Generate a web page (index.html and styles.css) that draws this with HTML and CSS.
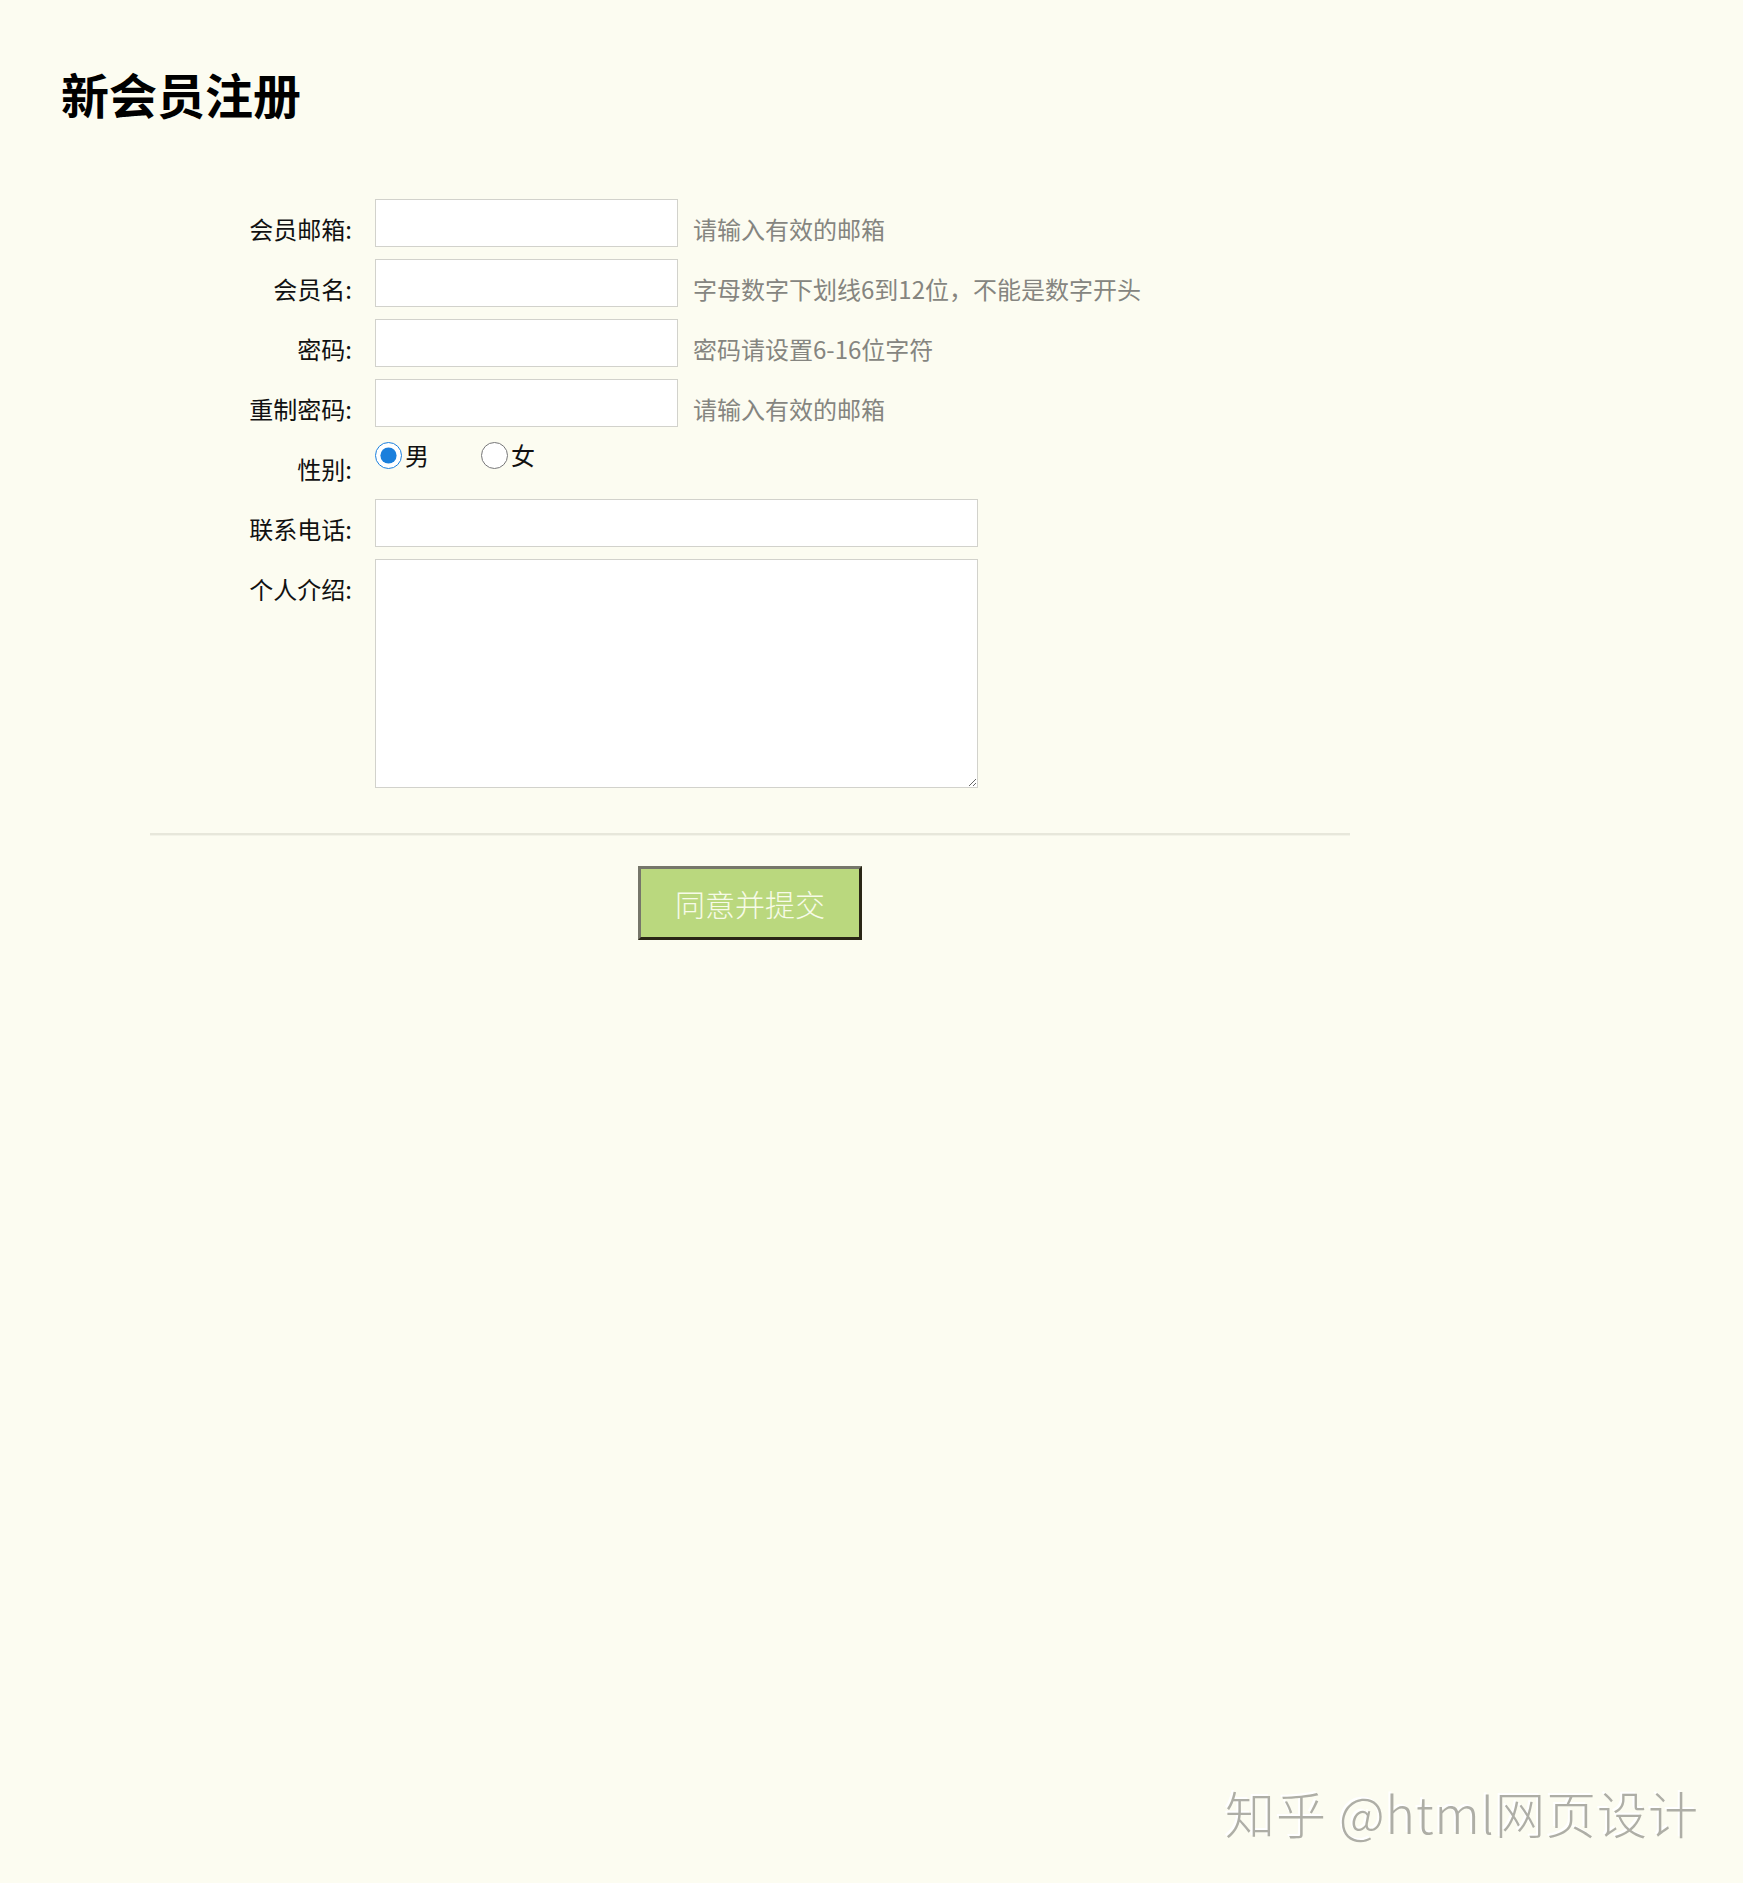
FILE: index.html
```html
<!DOCTYPE html>
<html lang="zh-CN">
<head>
    <meta charset="UTF-8">
    <meta name="viewport" content="width=device-width, initial-scale=1.0">
    <title>新会员注册</title>
    <link rel="stylesheet" href="styles.css">
</head>
<body>

    <h1>新会员注册</h1>

    <form class="reg-form">
        <div class="row">
            <label class="row-label" for="email">会员邮箱:</label>
            <input type="text" id="email" class="field">
            <span class="hint">请输入有效的邮箱</span>
        </div>
        <div class="row">
            <label class="row-label" for="username">会员名:</label>
            <input type="text" id="username" class="field">
            <span class="hint">字母数字下划线6到12位，不能是数字开头</span>
        </div>
        <div class="row">
            <label class="row-label" for="pwd">密码:</label>
            <input type="password" id="pwd" class="field">
            <span class="hint">密码请设置6-16位字符</span>
        </div>
        <div class="row">
            <label class="row-label" for="pwd2">重制密码:</label>
            <input type="password" id="pwd2" class="field">
            <span class="hint">请输入有效的邮箱</span>
        </div>
        <div class="row">
            <span class="row-label">性别:</span>
            <div class="radio-group">
                <label class="radio"><input type="radio" name="sex" value="m" checked>男</label>
                <label class="radio"><input type="radio" name="sex" value="f">女</label>
            </div>
        </div>
        <div class="row">
            <label class="row-label" for="phone">联系电话:</label>
            <input type="text" id="phone" class="field field-wide">
        </div>
        <div class="row">
            <label class="row-label" for="intro">个人介绍:</label>
            <textarea id="intro" class="field field-wide field-area"></textarea>
        </div>

        <hr class="divider">

        <div class="actions">
            <button type="submit" class="submit-btn">同意并提交</button>
        </div>
    </form>

    <div class="watermark">知乎 @html网页设计</div>

</body>
</html>
```

FILE: styles.css
```css
body {
    margin: 0;
    padding: 0;
    background-color: #fcfcf1;
    color: #111;
    font-family: "Noto Sans CJK SC", "Noto Sans", sans-serif;
}

h1 {
    margin: 64px 0 0;
    padding: 0 56px 0 61px;
    font-size: 48px;
    line-height: 58px;
    font-weight: bold;
    color: #000;
}

.reg-form {
    width: 1200px;
    margin: 77px 0 0 150px;
}

.row {
    display: flex;
    align-items: flex-start;
    margin-bottom: 12px;
}

.row-label {
    width: 202px;
    flex-shrink: 0;
    margin-right: 23px;
    padding-top: 14px;
    text-align: right;
    font-size: 24px;
    line-height: 32px;
    color: #111;
}

.field {
    box-sizing: border-box;
    width: 303px;
    height: 48px;
    margin: 0;
    border: 1px solid #d2d2cc;
    background-color: #fff;
    font-size: 18px;
    padding: 4px 8px;
}

.field-wide {
    width: 603px;
}

.field-area {
    height: 229px;
    resize: both;
    font-family: inherit;
}

.hint {
    margin-left: 15px;
    padding-top: 14px;
    font-size: 24px;
    line-height: 32px;
    color: #858580;
}

.radio-group {
    display: flex;
    align-items: center;
    height: 48px;
    align-self: flex-start;
}

.radio-group .radio {
    display: flex;
    align-items: center;
    margin-top: -16px;
    margin-right: 52px;
    font-size: 24px;
    line-height: 32px;
}

.radio input {
    width: 27px;
    height: 27px;
    margin: 0 3px 0 0;
    accent-color: #1a7fdc;
}

.divider {
    width: 1200px;
    height: 0;
    margin: 45px 0 0;
    border: 0;
    border-top: 2px solid #e7e7db;
    border-bottom: 1px solid #f3f3e8;
}

.actions {
    display: flex;
    justify-content: center;
    padding-top: 30px;
}

.submit-btn {
    width: 224px;
    height: 74px;
    padding: 0;
    border: 3px solid;
    border-color: #76766a #2a2616 #2a2616 #76766a;
    background-color: #bad87e;
    color: #f7fbe8;
    font-family: "Noto Sans CJK SC", sans-serif;
    font-size: 30px;
    font-weight: 300;
    cursor: pointer;
}

.watermark {
    position: fixed;
    right: 44px;
    bottom: 42px;
    font-size: 50px;
    line-height: 58px;
    font-weight: 300;
    color: #aeaea6;
    text-shadow: -2px -2px 0 #fff;
    letter-spacing: 1px;
}
```
